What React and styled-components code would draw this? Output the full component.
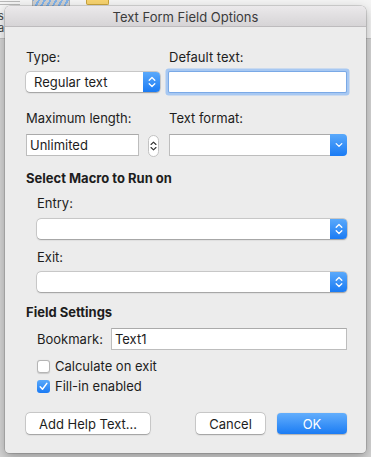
import styled, { createGlobalStyle } from "styled-components";

const GlobalStyle = createGlobalStyle`
  html, body {
    margin: 0;
    padding: 0;
    background: #d4d4d4;
  }
  body {
    font-family: Inter, "Liberation Sans", Arial, sans-serif;
    font-size: 13px;
    color: #1d1d1d;
    -webkit-font-smoothing: antialiased;
  }
`;

function UpDown({ color = "#fff" }) {
  return (
    <svg width="8" height="12" viewBox="0 0 8 12">
      <path
        d="M1.2 4.3 L4 1.5 L6.8 4.3 M1.2 7.7 L4 10.5 L6.8 7.7"
        fill="none"
        stroke={color}
        strokeWidth="1.3"
        strokeLinecap="round"
        strokeLinejoin="round"
      />
    </svg>
  );
}

function Down() {
  return (
    <svg width="8" height="6" viewBox="0 0 8 6">
      <path
        d="M1.2 1.6 L4 4.4 L6.8 1.6"
        fill="none"
        stroke="#fff"
        strokeWidth="1.3"
        strokeLinecap="round"
        strokeLinejoin="round"
      />
    </svg>
  );
}

function Check() {
  return (
    <svg width="11" height="11" viewBox="0 0 11 11">
      <path
        d="M2.2 5.8 L4.5 8.2 L8.8 2.4"
        fill="none"
        stroke="#fff"
        strokeWidth="1.5"
        strokeLinecap="round"
        strokeLinejoin="round"
      />
    </svg>
  );
}

function PopUp({ value, width }) {
  return (
    <PopUpSt $width={width}>
      <PopUpText>{value}</PopUpText>
      <BlueCap>
        <UpDown />
      </BlueCap>
    </PopUpSt>
  );
}

function CheckRow({ checked, label }) {
  return (
    <CheckRowSt>
      <Box $checked={checked}>{checked && <Check />}</Box>
      <span>{label}</span>
    </CheckRowSt>
  );
}

export default function App() {
  return (
    <>
      <GlobalStyle />
      <Desktop>
        <DocHeader>
          <SideText>
            <span>s</span>
            <span>a</span>
          </SideText>
          <Rules>
            <span />
            <span />
          </Rules>
          <StripeIcon />
          <FolderIcon />
        </DocHeader>

        <Window>
          <TitleBar>Text Form Field Options</TitleBar>
          <Body>
            <TopGrid>
              <Label>Type:</Label>
              <Label>Default text:</Label>
              <PopUp value="Regular text" />
              <FocusField />

              <Label $top={18}>Maximum length:</Label>
              <Label $top={18}>Text format:</Label>
              <LengthRow>
                <TextField $width={113}>Unlimited</TextField>
                <Stepper>
                  <UpDown color="#333" />
                </Stepper>
              </LengthRow>
              <Combo>
                <ComboText />
                <ComboCap>
                  <Down />
                </ComboCap>
              </Combo>
            </TopGrid>

            <SectionTitle $top={13}>Select Macro to Run on</SectionTitle>
            <Indented>
              <Label $top={9}>Entry:</Label>
              <Spaced $top={8}>
                <PopUp />
              </Spaced>
              <Label $top={10}>Exit:</Label>
              <Spaced $top={7}>
                <PopUp />
              </Spaced>
            </Indented>

            <SectionTitle $top={12}>Field Settings</SectionTitle>
            <Indented>
              <BookmarkRow>
                <span>Bookmark:</span>
                <TextField $grow>Text1</TextField>
              </BookmarkRow>
              <Checks>
                <CheckRow label="Calculate on exit" />
                <CheckRow checked label="Fill-in enabled" />
              </Checks>
            </Indented>

            <Footer>
              <PushButton $width={124}>Add Help Text...</PushButton>
              <FooterRight>
                <PushButton $width={69}>Cancel</PushButton>
                <PushButton $width={70} $primary>
                  OK
                </PushButton>
              </FooterRight>
            </Footer>
          </Body>
        </Window>
      </Desktop>
    </>
  );
}

const Desktop = styled.div`
  position: relative;
  width: 371px;
  height: 457px;
  overflow: hidden;
  background: #d5d5d5;
`;

const DocHeader = styled.div`
  position: relative;
  height: 38px;
  display: flex;
  align-items: flex-start;
  background: #f4f4f4;
  border-bottom: 1px solid #c4c4c4;
`;

const Rules = styled.div`
  width: 20px;
  margin-right: 12px;
  display: flex;
  flex-direction: column;
  gap: 2px;
  padding-top: 1px;

  span {
    height: 1px;
    background: #b8b8b8;
  }
`;

const StripeIcon = styled.div`
  width: 36px;
  height: 6px;
  background: repeating-linear-gradient(
    -60deg,
    #cfcfcf 0 3px,
    #7fb2ea 3px 5px
  );
  border: 1px solid #b2b2b2;
  border-top: none;
  margin-right: 16px;
`;

const FolderIcon = styled.div`
  width: 21px;
  height: 4px;
  background: #f7d36f;
  border: 1px solid #c9a33c;
  border-top: none;
  border-radius: 0 0 2px 2px;
`;

const SideText = styled.div`
  position: absolute;
  left: 0;
  top: 11px;
  width: 5px;
  overflow: hidden;
  display: flex;
  flex-direction: column;
  gap: 1px;
  line-height: 11px;
  font-size: 11px;
  color: #444;
  text-indent: -2px;
`;

const Window = styled.div`
  position: absolute;
  left: 5px;
  top: 6px;
  width: 361px;
  height: 447px;
  box-sizing: border-box;
  background: #ececec;
  border-radius: 5px 5px 4px 4px;
  box-shadow: 0 0 0 0.5px rgba(0, 0, 0, 0.25), 0 4px 12px rgba(0, 0, 0, 0.3);
  display: flex;
  flex-direction: column;
  overflow: hidden;
`;

const TitleBar = styled.div`
  height: 21px;
  box-sizing: border-box;
  display: flex;
  align-items: center;
  justify-content: center;
  background: linear-gradient(#ebe9eb, #d6d4d6);
  border-bottom: 1px solid #bdbbbd;
  color: #3b3b3b;
  font-size: 13px;
  padding-top: 1px;
`;

const Body = styled.div`
  flex: 1;
  padding: 22px 19px 0 21px;
  display: flex;
  flex-direction: column;
`;

const TopGrid = styled.div`
  display: grid;
  grid-template-columns: 134px 178px;
  column-gap: 9px;
  align-items: start;
`;

const Label = styled.div`
  height: 16px;
  line-height: 16px;
  margin-top: ${(p) => p.$top || 0}px;
  margin-bottom: ${(p) => (p.$top === 18 ? 8 : 7)}px;
`;

const PopUpSt = styled.div`
  display: flex;
  height: 20px;
  width: ${(p) => (p.$width ? `${p.$width}px` : "100%")};
  box-sizing: border-box;
  border-radius: 4px;
  background: #fff;
  box-shadow: 0 0 0 0.5px rgba(0, 0, 0, 0.22), 0 0.5px 1.5px rgba(0, 0, 0, 0.25);
  overflow: hidden;
`;

const PopUpText = styled.div`
  flex: 1;
  padding-left: 8px;
  line-height: 20px;
`;

const BlueCap = styled.div`
  width: 17px;
  display: flex;
  align-items: center;
  justify-content: center;
  background: linear-gradient(#5aa9fb, #1a7bf4);
`;

const FocusField = styled.div`
  height: 20px;
  width: 177px;
  background: #fff;
  box-shadow: 0 0 0 1px #7aa9e6, 0 0 0 3.5px #a7c8f2;
  border-radius: 1px;
`;

const LengthRow = styled.div`
  display: flex;
  align-items: flex-start;
  gap: 9px;
`;

const TextField = styled.div`
  height: 22px;
  box-sizing: border-box;
  width: ${(p) => (p.$width ? `${p.$width}px` : "auto")};
  flex: ${(p) => (p.$grow ? 1 : "none")};
  background: #fff;
  border: 1px solid #bdbdbd;
  border-top-color: #aaa;
  padding-left: 3px;
  line-height: 20px;
`;

const Stepper = styled.div`
  margin-top: 1px;
  width: 11px;
  height: 22px;
  box-sizing: border-box;
  border-radius: 6px;
  background: #fff;
  border: 1px solid #c2c2c2;
  display: flex;
  align-items: center;
  justify-content: center;

  svg {
    width: 7px;
  }
`;

const Combo = styled.div`
  display: flex;
  height: 22px;
`;

const ComboText = styled.div`
  flex: 1;
  background: #fff;
  border: 1px solid #bdbdbd;
  border-top-color: #aaa;
  border-right: none;
`;

const ComboCap = styled.div`
  width: 17px;
  border-radius: 0 4px 4px 0;
  display: flex;
  align-items: center;
  justify-content: center;
  background: linear-gradient(#5aa9fb, #1a7bf4);
`;

const SectionTitle = styled.div`
  margin-top: ${(p) => p.$top}px;
  height: 16px;
  line-height: 16px;
  font-weight: 700;
`;

const Indented = styled.div`
  padding-left: 11px;
  display: flex;
  flex-direction: column;
`;

const Spaced = styled.div`
  margin-top: ${(p) => p.$top - 7}px;
`;

const BookmarkRow = styled.div`
  margin-top: 8px;
  display: flex;
  align-items: center;
  gap: 8px;
`;

const Checks = styled.div`
  margin-top: 8px;
  display: flex;
  flex-direction: column;
  gap: 4px;
`;

const CheckRowSt = styled.div`
  display: flex;
  align-items: center;
  gap: 5px;
  height: 16px;
`;

const Box = styled.div`
  width: 13px;
  height: 13px;
  box-sizing: border-box;
  border-radius: 3px;
  display: flex;
  align-items: center;
  justify-content: center;
  background: ${(p) =>
    p.$checked ? "linear-gradient(#5aa9fb, #1a7bf4)" : "#fff"};
  border: ${(p) => (p.$checked ? "none" : "1px solid #b5b5b5")};
  box-shadow: ${(p) =>
    p.$checked ? "none" : "0 0.5px 1px rgba(0, 0, 0, 0.15)"};
`;

const Footer = styled.div`
  margin-top: 19px;
  display: flex;
  justify-content: space-between;
`;

const FooterRight = styled.div`
  display: flex;
  gap: 12px;
`;

const PushButton = styled.div`
  width: ${(p) => p.$width}px;
  height: 21px;
  box-sizing: border-box;
  border-radius: 4px;
  display: flex;
  align-items: center;
  justify-content: center;
  color: ${(p) => (p.$primary ? "#fff" : "#1d1d1d")};
  background: ${(p) =>
    p.$primary ? "linear-gradient(#63aefc, #1b7cf4)" : "#fff"};
  box-shadow: ${(p) =>
    p.$primary
      ? "0 0.5px 1px rgba(0, 0, 0, 0.25)"
      : "0 0 0 0.5px rgba(0, 0, 0, 0.22), 0 0.5px 1.5px rgba(0, 0, 0, 0.25)"};
`;
